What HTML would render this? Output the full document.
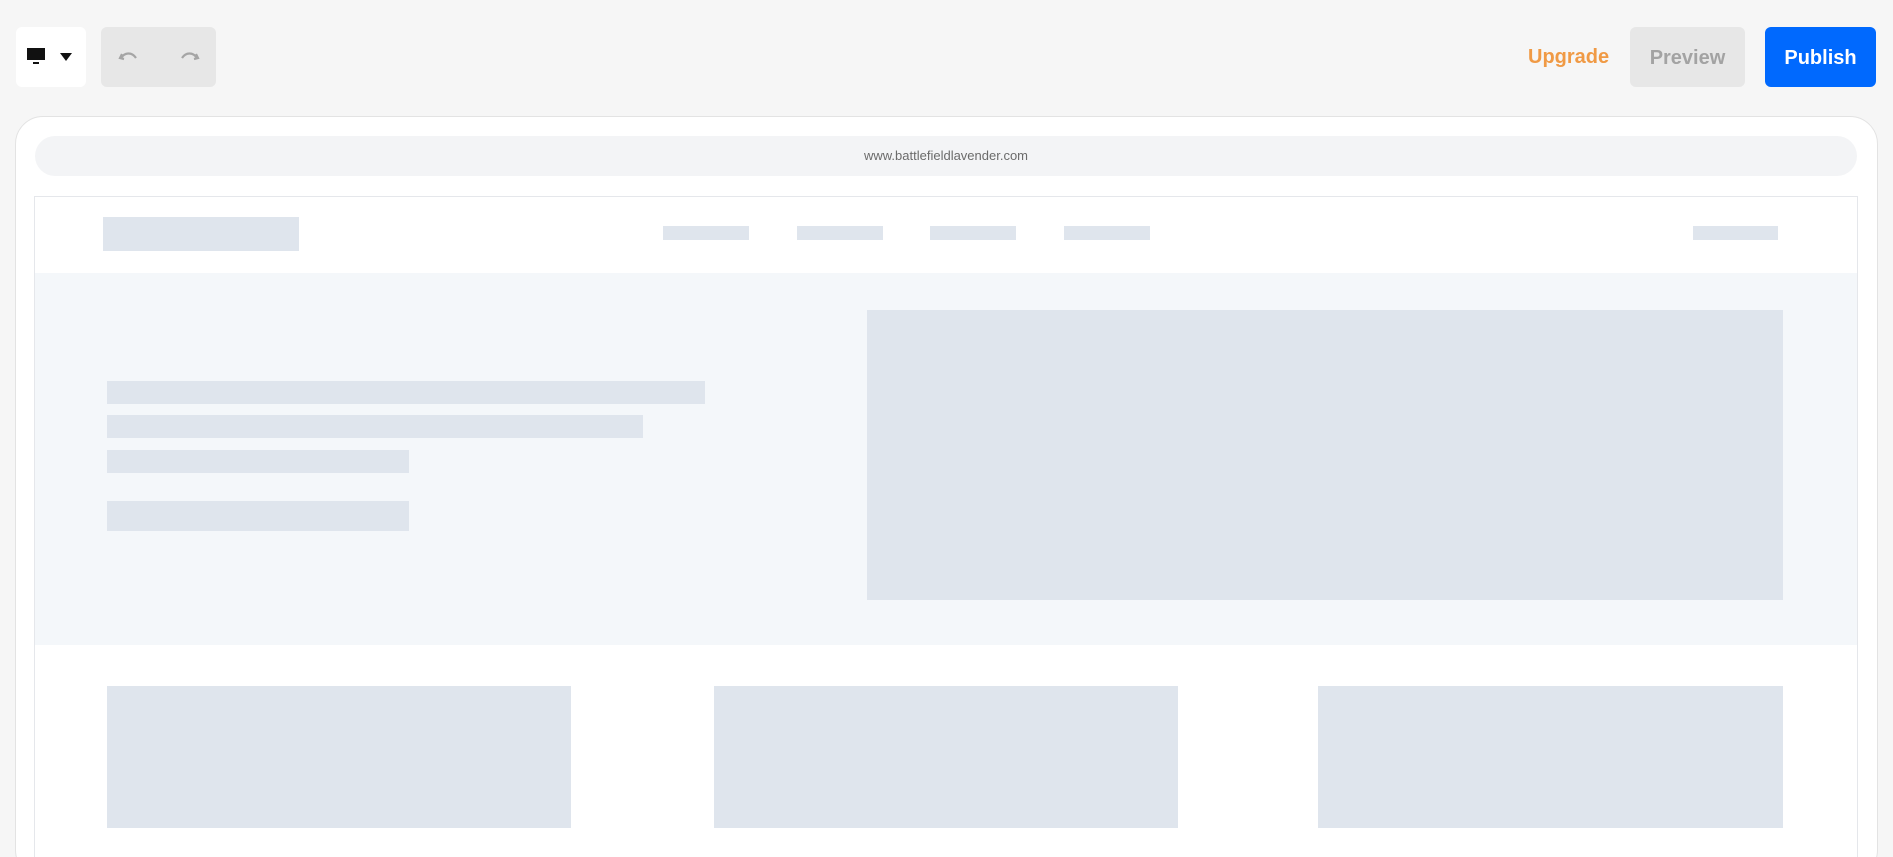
<!DOCTYPE html><html style="width:1893px;height:857px;overflow:hidden"><head><style>
body{margin:0;width:1893px;height:857px;background:#f6f6f6;font-family:"Liberation Sans",sans-serif;overflow:hidden;position:relative}
.a{position:absolute}
.g{background:#dfe5ed;position:absolute}
</style></head><body>
<div class="a" style="left:16px;top:27px;width:70px;height:60px;background:#fff;border-radius:6px"></div>
<svg class="a" style="left:26px;top:46px" width="48" height="22"><rect x="1" y="2" width="18" height="12" fill="#111"/><rect x="7" y="16" width="6" height="2" fill="#111"/><path d="M34 7h12l-6 8z" fill="#111"/></svg>
<div class="a" style="left:101px;top:27px;width:115px;height:60px;background:#e7e7e7;border-radius:6px"></div>
<svg class="a" style="left:118px;top:48px" width="84" height="18"><path d="M4 6 L2 10 L6 11 M3 10 C7 4 14 4 18 10" stroke="#a5a5a5" stroke-width="2.2" fill="none"/><path d="M78 6 L80 10 L76 11 M79 10 C75 4 68 4 64 10" stroke="#a5a5a5" stroke-width="2.2" fill="none"/></svg>
<div class="a" style="left:1528px;top:46px;font-size:20px;font-weight:bold;color:#f09a45">Upgrade</div>
<div class="a" style="left:1630px;top:27px;width:115px;height:60px;background:#e7e7e7;border-radius:6px;color:#a3a3a3;font-weight:bold;font-size:20px;line-height:62px;text-align:center">Preview</div>
<div class="a" style="left:1765px;top:27px;width:111px;height:60px;background:#0069fe;border-radius:6px;color:#fff;font-weight:bold;font-size:20px;line-height:62px;text-align:center">Publish</div>
<div class="a" style="left:15px;top:116px;width:1861px;height:760px;background:#fff;border:1px solid #e3e3e3;border-radius:28px"></div>
<div class="a" style="left:35px;top:136px;width:1822px;height:40px;background:#f3f4f6;border-radius:20px;text-align:center;line-height:40px;font-size:13px;color:#6b6b6b">www.battlefieldlavender.com</div>
<div class="a" style="left:34px;top:196px;width:1822px;height:700px;border:1px solid #e5e7eb;background:#fff"></div>
<div class="a" style="left:35px;top:273px;width:1822px;height:372px;background:#f4f7fa"></div>
<div class="g" style="left:103px;top:217px;width:196px;height:34px"></div>
<div class="g" style="left:663px;top:226px;width:86px;height:14px"></div>
<div class="g" style="left:797px;top:226px;width:86px;height:14px"></div>
<div class="g" style="left:930px;top:226px;width:86px;height:14px"></div>
<div class="g" style="left:1064px;top:226px;width:86px;height:14px"></div>
<div class="g" style="left:1693px;top:226px;width:85px;height:14px"></div>
<div class="g" style="left:867px;top:310px;width:916px;height:290px"></div>
<div class="g" style="left:107px;top:381px;width:598px;height:23px"></div>
<div class="g" style="left:107px;top:415px;width:536px;height:23px"></div>
<div class="g" style="left:107px;top:450px;width:302px;height:23px"></div>
<div class="g" style="left:107px;top:501px;width:302px;height:30px"></div>
<div class="g" style="left:107px;top:686px;width:464px;height:142px"></div>
<div class="g" style="left:714px;top:686px;width:464px;height:142px"></div>
<div class="g" style="left:1318px;top:686px;width:465px;height:142px"></div>
</body></html>
